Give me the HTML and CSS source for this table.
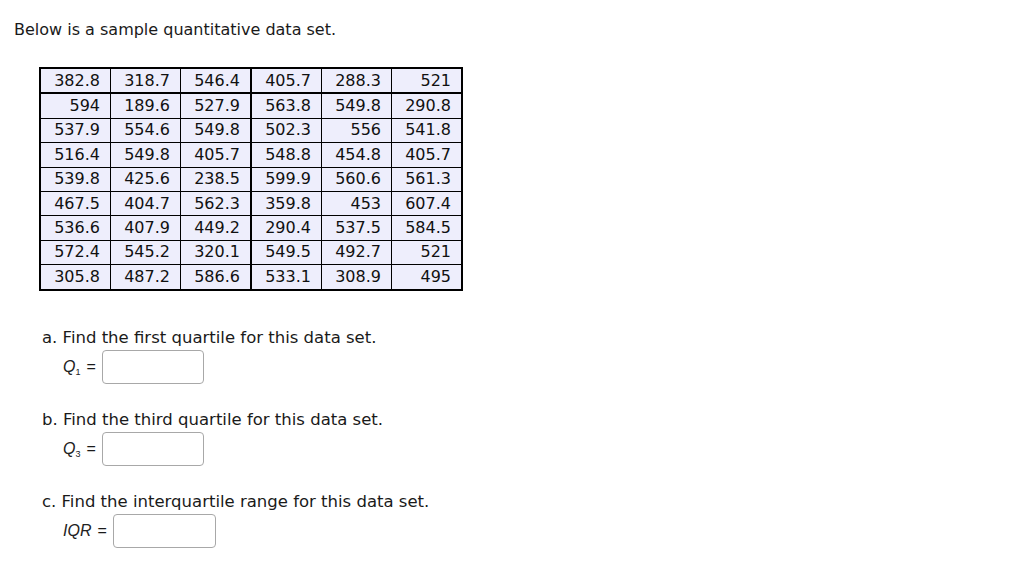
FILE: index.html
```html
<!DOCTYPE html>
<html>
<head>
<meta charset="utf-8">
<link rel="stylesheet" href="styles.css">
</head>
<body>
<div class="page">
  <p class="intro">Below is a sample quantitative data set.</p>
  <table class="data">
    <tr class="first"><td>382.8</td><td>318.7</td><td class="sep">546.4</td><td>405.7</td><td>288.3</td><td>521</td></tr>
    <tr><td>594</td><td>189.6</td><td class="sep">527.9</td><td>563.8</td><td>549.8</td><td>290.8</td></tr>
    <tr><td>537.9</td><td>554.6</td><td class="sep">549.8</td><td>502.3</td><td>556</td><td>541.8</td></tr>
    <tr><td>516.4</td><td>549.8</td><td class="sep">405.7</td><td>548.8</td><td>454.8</td><td>405.7</td></tr>
    <tr><td>539.8</td><td>425.6</td><td class="sep">238.5</td><td>599.9</td><td>560.6</td><td>561.3</td></tr>
    <tr><td>467.5</td><td>404.7</td><td class="sep">562.3</td><td>359.8</td><td>453</td><td>607.4</td></tr>
    <tr><td>536.6</td><td>407.9</td><td class="sep">449.2</td><td>290.4</td><td>537.5</td><td>584.5</td></tr>
    <tr><td>572.4</td><td>545.2</td><td class="sep">320.1</td><td>549.5</td><td>492.7</td><td>521</td></tr>
    <tr><td>305.8</td><td>487.2</td><td class="sep">586.6</td><td>533.1</td><td>308.9</td><td>495</td></tr>
  </table>
  <div class="questions">
    <div class="question">
      <p class="prompt">a. Find the first quartile for this data set.</p>
      <div class="answer"><span class="var">Q<sub>1</sub></span><span class="eq">=</span><span class="box"></span></div>
    </div>
    <div class="question">
      <p class="prompt">b. Find the third quartile for this data set.</p>
      <div class="answer"><span class="var">Q<sub>3</sub></span><span class="eq">=</span><span class="box"></span></div>
    </div>
    <div class="question">
      <p class="prompt">c. Find the interquartile range for this data set.</p>
      <div class="answer"><span class="var">IQR</span><span class="eq">=</span><span class="box wide"></span></div>
    </div>
  </div>
</div>
</body>
</html>
```

FILE: styles.css
```css
html, body {
  margin: 0;
  padding: 0;
  background: #ffffff;
}
body {
  font-family: "DejaVu Sans", "Open Sans", sans-serif;
  font-size: 16px;
  color: #1a1a1a;
}
.page {
  padding: 21px 0 0 14px;
  display: flex;
  flex-direction: column;
  align-items: flex-start;
}
.intro {
  margin: 0;
  line-height: 18px;
}
.data {
  margin: 28px 0 0 25px;
  border-collapse: collapse;
  border: 2px solid #000;
  background: #eeeefc;
}
.data td {
  border: 1px solid #000;
  width: 59px;
  height: 23.4px;
  padding: 0 10px 0 0;
  text-align: right;
  line-height: 22px;
  color: #111;
}
.data tr.first td {
  border-bottom: 2px solid #000;
}
.data td.sep {
  border-right: 2px solid #000;
}
.questions {
  margin: 38px 0 0 28px;
  display: flex;
  flex-direction: column;
  gap: 27px;
}
.question {
  display: flex;
  flex-direction: column;
  gap: 3px;
}
.prompt {
  margin: 0;
  font-size: 16.5px;
  line-height: 18px;
}
.answer {
  display: flex;
  align-items: center;
  padding-left: 21px;
  height: 34px;
}
.var {
  font-family: "Liberation Sans", Arial, sans-serif;
  font-style: italic;
  font-size: 16px;
  color: #222;
}
.var sub {
  font-style: normal;
  font-size: 9px;
  vertical-align: -3px;
  line-height: 0;
}
.eq {
  font-family: "Liberation Sans", Arial, sans-serif;
  font-size: 16px;
  margin: 0 6px 0 6px;
}
.box {
  display: block;
  width: 100px;
  height: 32px;
  border: 1px solid #a8a8a8;
  border-radius: 4px;
  background: #fff;
}
.box.wide {
  width: 101px;
}
```
